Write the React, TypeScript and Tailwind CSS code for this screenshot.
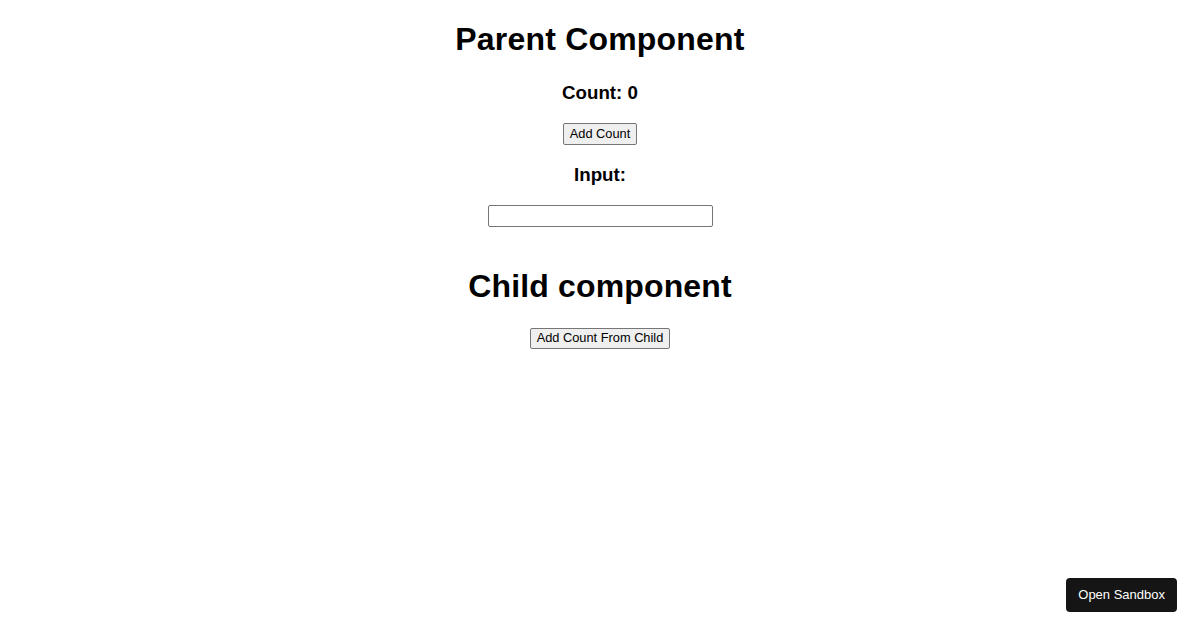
export default function App() {
  return (
    <div className="relative w-[1200px] h-[630px] bg-white text-black font-['Liberation_Sans',Arial,sans-serif]">
      <div className="flex flex-col items-center">
        <h1 className="mt-[21px] text-[32px] leading-[37px] font-bold tracking-[0.2px]">Parent Component</h1>
        <h3 className="mt-[24px] text-[18.72px] leading-[22px] font-bold">Count: 0</h3>
        <button className="mt-[19px] h-[22px] px-[6px] border border-[#767676] rounded-[2px] bg-[#efefef] text-[12.8px] leading-none">
          Add Count
        </button>
        <h3 className="mt-[19px] text-[18.72px] leading-[22px] font-bold">Input:</h3>
        <input
          type="text"
          className="mt-[19px] w-[225px] h-[22px] border border-[#767676] rounded-[2px] bg-white px-[2px] text-[13.33px] outline-none"
        />
        <h1 className="mt-[41px] text-[32px] leading-[37px] font-bold tracking-[0.15px]">Child component</h1>
        <button className="mt-[23px] h-[21px] px-[6px] border border-[#767676] rounded-[2px] bg-[#efefef] text-[12.8px] leading-none">
          Add Count From Child
        </button>
      </div>

      {/* floating sandbox link */}
      <button className="absolute right-[23px] bottom-[18px] h-[34px] px-[12px] rounded-[4px] bg-[#151515] text-white text-[13px] font-['Liberation_Sans',Arial,sans-serif]">
        Open Sandbox
      </button>
    </div>
  );
}
